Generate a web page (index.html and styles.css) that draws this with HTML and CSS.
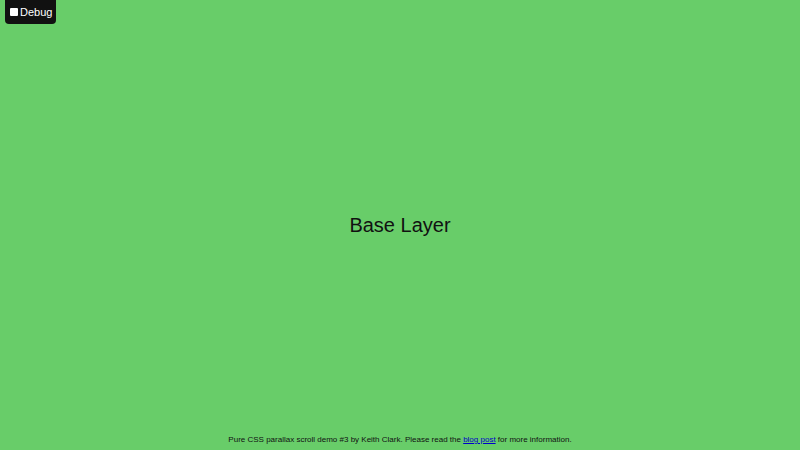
FILE: index.html
```html
<!DOCTYPE html>
<html>
<head>
<meta charset="utf-8">
<link rel="stylesheet" href="styles.css">
</head>
<body>
<div class="debug"><span class="box"></span><span class="label">Debug</span></div>
<main class="base">Base Layer</main>
<footer class="foot">Pure CSS parallax scroll demo #3 by Keith Clark. Please read the <a href="#">blog post</a> for more information.</footer>
</body>
</html>
```
FILE: styles.css
```css
html, body { margin: 0; padding: 0; }
body {
  width: 800px;
  height: 450px;
  background: #68cd69;
  font-family: "Liberation Sans", Arial, sans-serif;
  color: #111;
  display: flex;
  flex-direction: column;
  overflow: hidden;
}
.debug {
  align-self: flex-start;
  margin-left: 5px;
  background: #111;
  color: #fff;
  border-radius: 0 0 4px 4px;
  height: 24px;
  padding: 0 4px 0 5px;
  display: flex;
  align-items: center;
  gap: 2px;
  font-size: 11px;
}
.box {
  width: 8px;
  height: 8px;
  background: #fff;
  border-radius: 1px;
  margin-top: -1px;
}
.base {
  flex: 1;
  display: flex;
  align-items: center;
  justify-content: center;
  font-size: 20px;
  padding-bottom: 9px;
}
.foot {
  text-align: center;
  font-size: 8px;
  height: 15px;
  line-height: 10px;
}
.foot a { color: #00c; }
```
